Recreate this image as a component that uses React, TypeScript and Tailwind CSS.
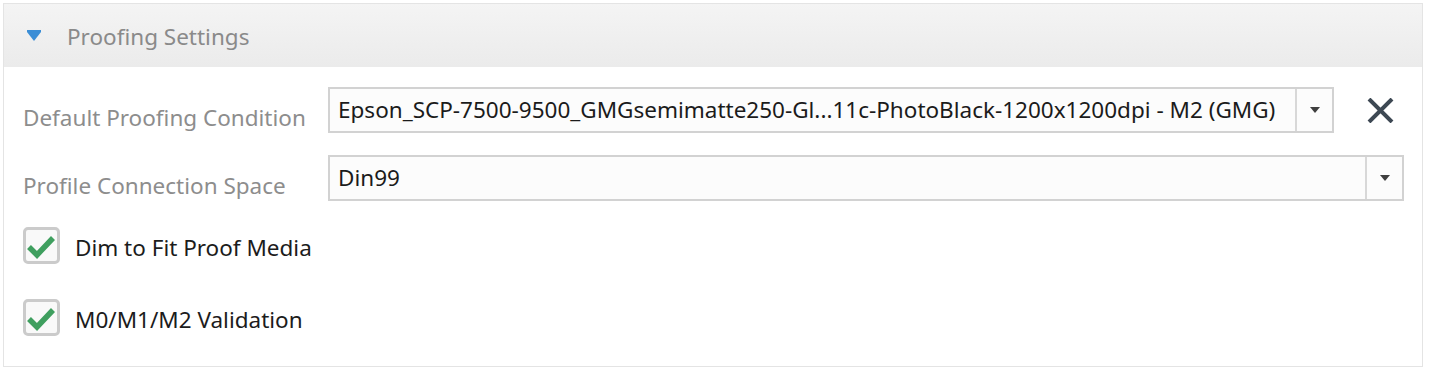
import { useState } from "react";

const FONT = { fontFamily: '"Noto Sans", "Open Sans", sans-serif' };

function Caret() {
  return (
    <svg width="10" height="6" viewBox="0 0 10 6">
      <polygon points="0,0 10,0 5,6" fill="#3f3f3f" />
    </svg>
  );
}

function Dropdown({ value, width }: { value: string; width: string }) {
  return (
    <div
      className={`flex h-[46px] items-stretch border-2 border-[#d2d2d2] bg-[#fcfcfc] ${width}`}
    >
      <div className="flex flex-1 items-center overflow-hidden whitespace-nowrap pl-[8px] text-[22.5px] text-[#1b1b1b]">
        {value}
      </div>
      <div className="flex w-[37px] items-center justify-center border-l-2 border-[#d8d8d8]">
        <Caret />
      </div>
    </div>
  );
}

function Check({ label, checked }: { label: string; checked: boolean }) {
  return (
    <div className="flex items-center gap-[15px]">
      <div className="flex h-[37px] w-[37px] items-center justify-center rounded-[5px] border-[3px] border-[#cbcbcb] bg-[#f9f9f9]">
        {checked && (
          <svg width="31" height="31" viewBox="0 0 31 31">
            <polyline
              points="3,17 11,25 27,8"
              fill="none"
              stroke="#3f9f5f"
              strokeWidth="5.5"
            />
          </svg>
        )}
      </div>
      <span className="pt-[4px] text-[22.5px] leading-[30px] text-[#1c1c1c]">{label}</span>
    </div>
  );
}

export default function App() {
  const [dim] = useState(true);
  const [valid] = useState(true);

  return (
    <div className="h-[376px] w-[1432px] bg-white pl-[3px] pt-[3px]" style={FONT}>
      <div className="flex h-[364px] w-[1420px] flex-col border border-[#e4e4e4]">

        {/* Header */}
        <div className="flex h-[63px] items-center gap-[26px] bg-gradient-to-b from-[#f4f4f4] to-[#ebebeb] pl-[23px]">
          <svg width="14" height="11" viewBox="0 0 14 11">
            <polygon points="0,0 14,0 14,2 7,11 0,2" fill="#3b8ed6" />
          </svg>
          <span className="pt-[2px] text-[22.5px] leading-[30px] text-[#8a8a8a]">Proofing Settings</span>
        </div>

        {/* Body */}
        <div className="flex flex-col pl-[19px] pr-[18px] pt-[20px]">
          <div className="flex items-start">
            <span className="w-[305px] pt-[16px] text-[22.5px] leading-[30px] text-[#8d8d8d]">
              Default Proofing Condition
            </span>
            <Dropdown
              width="w-[1006px]"
              value="Epson_SCP-7500-9500_GMGsemimatte250-Gl...11c-PhotoBlack-1200x1200dpi - M2 (GMG)"
            />
            <button className="ml-[32px] flex h-[46px] w-[28px] items-center justify-center">
              <svg width="27" height="25" viewBox="0 0 27 25">
                <path d="M2 1 L25 24 M25 1 L2 24" stroke="#3d4853" strokeWidth="4" />
              </svg>
            </button>
          </div>

          <div className="mt-[22px] flex items-start">
            <span className="w-[305px] pt-[16px] text-[22.5px] leading-[30px] text-[#8d8d8d]">
              Profile Connection Space
            </span>
            <Dropdown width="flex-1" value="Din99" />
          </div>

          <div className="mt-[26px] flex flex-col gap-[35px]">
            <Check label="Dim to Fit Proof Media" checked={dim} />
            <Check label="M0/M1/M2 Validation" checked={valid} />
          </div>
        </div>

      </div>
    </div>
  );
}
